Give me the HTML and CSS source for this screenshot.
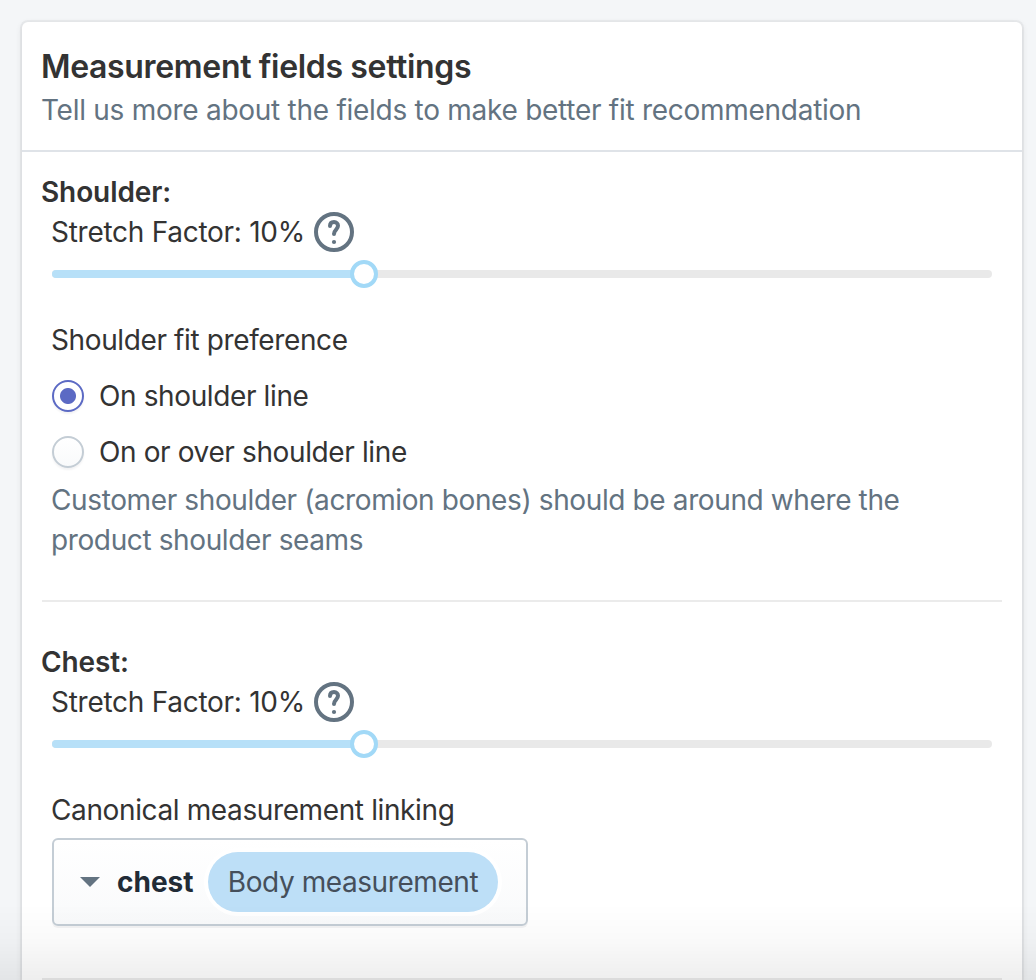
FILE: index.html
```html
<!DOCTYPE html>
<html lang="en">
<head>
  <meta charset="UTF-8" />
  <meta name="viewport" content="width=device-width, initial-scale=1" />
  <title>Measurement fields settings</title>
  <link rel="stylesheet" href="styles.css">
</head>
<body>
  <div class="card">
    <!-- Card header -->
    <div class="card-header">
      <h2>Measurement fields settings</h2>
      <p>Tell us more about the fields to make better fit recommendation</p>
    </div>

    <div class="card-body">
      <!-- Shoulder -->
      <div class="field">
        <h3>Shoulder:</h3>
        <div class="field-content">
          <div class="stretch">
            <span>Stretch Factor: 10%</span>
            <svg class="help-icon" viewBox="0 0 40 40">
              <circle cx="20" cy="20" r="18" />
              <path d="M16 14 C16 11.5 17.6 10 20 10 C22.4 10 24 11.6 24 13.8 C24 17.4 20 17.8 20 22" />
              <circle class="dot" cx="20" cy="30" r="2.1" />
            </svg>
          </div>
          <div class="slider">
            <div class="slider-fill"></div>
            <div class="slider-thumb"></div>
          </div>

          <p class="label">Shoulder fit preference</p>
          <div class="radio">
            <span class="radio-circle checked"></span>
            <span>On shoulder line</span>
          </div>
          <div class="radio">
            <span class="radio-circle"></span>
            <span>On or over shoulder line</span>
          </div>
          <p class="help-text">Customer shoulder (acromion bones) should be around where the product shoulder seams</p>
        </div>
      </div>

      <!-- Chest -->
      <div class="field">
        <h3>Chest:</h3>
        <div class="field-content">
          <div class="stretch">
            <span>Stretch Factor: 10%</span>
            <svg class="help-icon" viewBox="0 0 40 40">
              <circle cx="20" cy="20" r="18" />
              <path d="M16 14 C16 11.5 17.6 10 20 10 C22.4 10 24 11.6 24 13.8 C24 17.4 20 17.8 20 22" />
              <circle class="dot" cx="20" cy="30" r="2.1" />
            </svg>
          </div>
          <div class="slider">
            <div class="slider-fill"></div>
            <div class="slider-thumb"></div>
          </div>

          <p class="label">Canonical measurement linking</p>
          <button class="link-button" type="button">
            <span class="caret"></span>
            <strong>chest</strong>
            <span class="badge">Body measurement</span>
          </button>
        </div>
      </div>
    </div>
  </div>
  <div class="bottom-fade"></div>
</body>
</html>
```
FILE: styles.css
```css
* {
  box-sizing: border-box;
}

body {
  margin: 0;
  padding: 22px 14px 0 22px;
  background: #f4f6f8;
  color: #333333;
  font-family: Inter, "Liberation Sans", sans-serif;
  font-size: 28px;
  line-height: 40px;
  letter-spacing: -0.38px;
}

h2, h3, p {
  margin: 0 0 0 -1px;
}

.card {
  width: 1000px;
  background: #ffffff;
  border-radius: 6px 6px 0 0;
  box-shadow: 0 0 0 2px rgba(63, 63, 68, 0.05), 0 2px 6px rgba(63, 63, 68, 0.15);
}

.card-header {
  padding: 21px 20px 20px;
  border-bottom: 2px solid #dfe3e8;
}

.card-header h2 {
  font-size: 32px;
  font-weight: 600;
  line-height: 48px;
  letter-spacing: -0.34px;
}

.card-header p {
  margin-top: -1px;
  letter-spacing: -0.27px;
}

.card-header p,
.help-text {
  color: #637381;
}

.card-body {
  padding: 20px 20px 0;
}

/* Field sections */
.field {
  padding-bottom: 40px;
  margin-bottom: 40px;
  border-bottom: 2px solid #ebebeb;
}

.field:last-child {
  padding-bottom: 52px;
  margin-bottom: 0;
}

.field h3 {
  font-size: 28px;
  font-weight: 600;
  letter-spacing: -0.1px;
}

.field-content {
  padding: 0 10px;
}

.stretch {
  display: flex;
  align-items: center;
  gap: 9px;
  margin-left: -1px;
  letter-spacing: -0.27px;
}

.stretch span {
  width: 254px;
  white-space: nowrap;
}

.help-icon {
  width: 40px;
  height: 40px;
  fill: none;
  stroke: #637381;
  stroke-width: 4;
  stroke-linecap: round;
}

.help-icon .dot {
  fill: #637381;
  stroke: none;
}

/* Slider */
.slider {
  position: relative;
  height: 8px;
  margin: 18px 0 42px;
  border-radius: 4px;
  background: #e9e9e9;
}

.slider-fill {
  width: 312px;
  height: 8px;
  border-radius: 4px;
  background: #b7e0f8;
}

.slider-thumb {
  position: absolute;
  top: -10px;
  left: 298px;
  width: 28px;
  height: 28px;
  border: 4px solid #a2d9f7;
  border-radius: 50%;
  background: #ffffff;
}

/* Radio buttons */
.radio {
  display: flex;
  align-items: center;
  gap: 15px;
  padding: 16px 0 0;
}

.radio-circle {
  width: 32px;
  height: 32px;
  border: 2px solid #c4cdd5;
  border-radius: 50%;
  background: linear-gradient(#ffffff, #f9fafb);
  box-shadow: 0 2px 2px rgba(22, 29, 37, 0.05);
}

.radio-circle.checked {
  border-color: #5c6ac4;
  background: radial-gradient(circle, #5c6ac4 7.5px, #ffffff 8.5px);
}

.help-text {
  margin-top: 8px;
}

/* Measurement link */
.link-button {
  display: flex;
  align-items: center;
  width: 476px;
  height: 88px;
  margin-top: 8px;
  padding: 0 28px 0 26px;
  border: 2px solid #c4cdd5;
  border-radius: 6px;
  background: linear-gradient(#ffffff, #f9fafb);
  box-shadow: 0 2px 0 rgba(22, 29, 37, 0.05);
  color: #212b36;
  font: inherit;
}

.caret {
  border: 10px solid transparent;
  border-top-color: #637381;
  border-bottom: 0;
}

.link-button strong {
  margin-left: 17px;
  font-weight: 700;
  letter-spacing: 0;
}

.badge {
  margin-left: auto;
  width: 290px;
  height: 60px;
  border-radius: 30px;
  background: #bddff7;
  box-shadow: 0 0 0 4px #ffffff;
  color: #454f5b;
  line-height: 60px;
  letter-spacing: -0.43px;
  text-align: center;
}

.bottom-fade {
  position: fixed;
  left: 0;
  right: 0;
  bottom: 0;
  height: 76px;
  background: linear-gradient(rgba(0, 0, 0, 0), rgba(0, 0, 0, 0.022) 50%, rgba(0, 0, 0, 0.065));
  pointer-events: none;
}
```
